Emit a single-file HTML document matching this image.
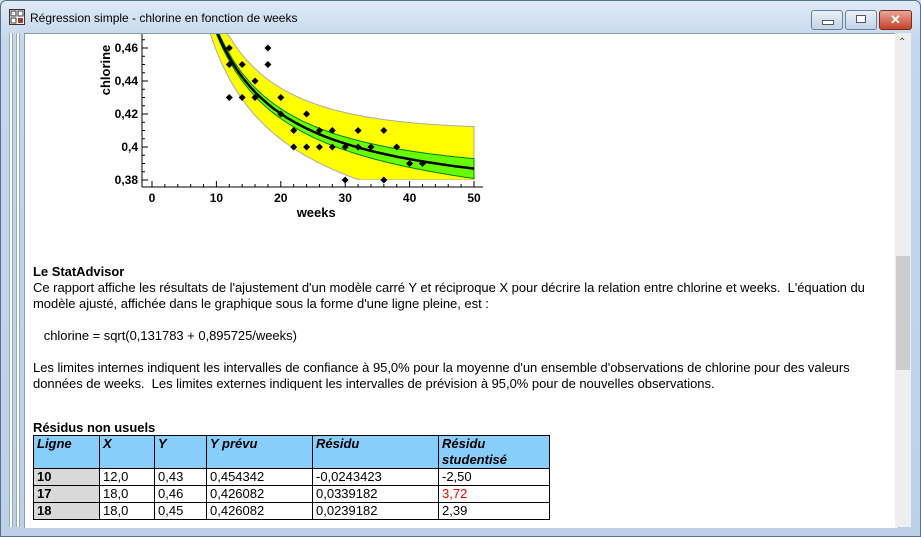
<!DOCTYPE html><html><head><meta charset="utf-8"><style>
body{margin:0;width:921px;height:537px;overflow:hidden;font-family:"Liberation Sans",Arial,sans-serif;background:#cfe0f1;position:relative}
.frame{position:absolute;left:0;top:0;width:919px;height:535px;border:1px solid #59708c;border-radius:6px 6px 0 0;background:linear-gradient(#dfeaf6,#c4d7ec 40px,#bcd1e8)}
.title{position:absolute;left:30px;top:11px;font-size:12px;color:#000}
.content{position:absolute;left:24px;top:33px;width:872px;height:494px;background:#fff;border-top:1px solid #8a9bb0;border-left:1px solid #8a9bb0}
.sb{position:absolute;left:895px;top:33px;width:16px;height:494px;background:#eeeeee}
.thumb{position:absolute;left:896px;top:256px;width:14px;height:114px;background:#cdcdcd}
.split{position:absolute;top:33px;height:494px;width:2px;background:#fff;border-left:1px solid #9aa;border-right:1px solid #9aa}
.btn{position:absolute;top:10px;height:18px;border:1px solid #6b7f99;border-radius:3px;background:linear-gradient(#e8f0f9,#c2d3e7)}
p{margin:0;position:absolute;left:33px;font-size:13px;line-height:16px;white-space:nowrap;letter-spacing:-0.03px}
table{position:absolute;left:33px;top:435px;border-collapse:collapse;font-size:13px}
td{border:1px solid #000;padding:0 3px;height:16px;line-height:16px;vertical-align:top}
th{border:1px solid #000;padding:0 3px;background:#87cefa;font-style:italic;text-align:left;vertical-align:top;line-height:16px;height:32px}
td.g{background:#d9d9d9;font-weight:bold}
</style></head><body>
<div class="frame"></div>
<svg style="position:absolute;left:9px;top:9px" width="16" height="16"><rect x="0.5" y="0.5" width="15" height="15" fill="#fff" stroke="#333"/><rect x="2" y="2" width="5" height="5" fill="none" stroke="#333"/><rect x="9" y="2" width="5" height="5" fill="none" stroke="#333"/><rect x="2" y="9" width="5" height="5" fill="none" stroke="#333"/><rect x="9" y="9" width="5" height="5" fill="#a33"/></svg>
<div class="title">Régression simple - chlorine en fonction de weeks</div>
<div class="btn" style="left:811px;width:30px"><div style="position:absolute;left:10px;top:9px;width:10px;height:3px;background:#fff;border:1px solid #556"></div></div>
<div class="btn" style="left:845px;width:30px"><div style="position:absolute;left:10px;top:4px;width:8px;height:6px;border:1px solid #556;background:#fff"></div></div>
<div class="btn" style="left:879px;width:31px;background:linear-gradient(#e9a89a,#c7402a);border-color:#7a2a1f;color:#fff;font-weight:bold;font-size:13px;text-align:center;line-height:17px">✕</div>
<div class="split" style="left:9px"></div><div class="split" style="left:16px"></div>
<div class="content"></div>
<div class="sb"></div><div class="thumb"></div>
<div style="position:absolute;left:898px;top:37px;font-size:10px;color:#444">⌃</div>
<svg id="plot" style="position:absolute;left:24px;top:34px" width="480" height="190" font-family="Liberation Sans,Arial,sans-serif" font-weight="bold" font-size="12"></svg>
<p style="top:264px;font-weight:bold">Le StatAdvisor</p>
<p style="top:280px">Ce rapport affiche les résultats de l'ajustement d'un modèle carré Y et réciproque X pour décrire la relation entre chlorine et weeks.&nbsp; L'équation du</p>
<p style="top:296px">modèle ajusté, affichée dans le graphique sous la forme d'une ligne pleine, est :</p>
<p style="top:328px">&nbsp;&nbsp;&nbsp;chlorine = sqrt(0,131783 + 0,895725/weeks)</p>
<p style="top:360px">Les limites internes indiquent les intervalles de confiance à 95,0% pour la moyenne d'un ensemble d'observations de chlorine pour des valeurs</p>
<p style="top:376px">données de weeks.&nbsp; Les limites externes indiquent les intervalles de prévision à 95,0% pour de nouvelles observations.</p>
<p style="top:420px;font-weight:bold">Résidus non usuels</p>
<table>
<tr><th style="width:59px">Ligne</th><th style="width:48px">X</th><th style="width:45px">Y</th><th style="width:99px">Y prévu</th><th style="width:119px">Résidu</th><th style="width:104px">Résidu<br>studentisé</th></tr>
<tr><td class="g">10</td><td>12,0</td><td>0,43</td><td>0,454342</td><td>-0,0243423</td><td>-2,50</td></tr>
<tr><td class="g">17</td><td>18,0</td><td>0,46</td><td>0,426082</td><td>0,0339182</td><td style="color:#f00">3,72</td></tr>
<tr><td class="g">18</td><td>18,0</td><td>0,45</td><td>0,426082</td><td>0,0239182</td><td>2,39</td></tr>
</table>
<script>
var s=document.getElementById('plot'),ox=24,oy=34;
function X(x){return 152+x*6.44-ox}function Y(y){return 48+(0.46-y)*1650-oy}
function f(x){return Math.sqrt(0.131783+0.895725/x)}
function band(h){var up=[],dn=[];for(var x=8;x<=50.01;x+=0.5){var v=f(x),d=h(x);up.push(X(x).toFixed(1)+','+Math.max(Y(v+d),-1).toFixed(1));dn.unshift(X(x).toFixed(1)+','+Math.min(Y(Math.max(v-d,0.38)),Y(0.38)).toFixed(1));}return up.concat(dn).join(' ');}
var h='';
h+='<defs><clipPath id="c"><rect x="'+(X(0)-10)+'" y="0" width="340" height="'+Y(0.38)+'"/></clipPath></defs><g clip-path="url(#c)">';
h+='<polygon points="'+band(function(x){return 0.0155+(x-20)/30*0.010})+'" fill="#ffff00" stroke="#aaa" stroke-width="1"/>';
h+='<polygon points="'+band(function(x){return 0.003+(x-20)/30*0.003})+'" fill="#66ff00" stroke="#008000" stroke-width="1"/>';
var pl=[];for(var x=8;x<=50.01;x+=0.5)pl.push(X(x).toFixed(1)+','+Y(f(x)).toFixed(1));
h+='<polyline points="'+pl.join(' ')+'" fill="none" stroke="#000" stroke-width="2.5"/></g>';
var pts=[[12,.46],[12,.45],[12,.43],[14,.45],[14,.43],[16,.44],[16,.43],[18,.46],[18,.45],[20,.43],[20,.42],[22,.41],[22,.40],[24,.42],[24,.40],[26,.41],[26,.40],[28,.41],[28,.40],[30,.40],[30,.38],[32,.41],[32,.40],[34,.40],[36,.41],[36,.38],[38,.40],[40,.39],[42,.39]];
pts.forEach(function(p){var a=X(p[0]),b=Y(p[1]);h+='<polygon points="'+a+','+(b-3.5)+' '+(a+3.5)+','+b+' '+a+','+(b+3.5)+' '+(a-3.5)+','+b+'"/>'});
var ax=142-ox,ay=187-oy;
h+='<line x1="'+ax+'" y1="0" x2="'+ax+'" y2="'+ay+'" stroke="#000"/><line x1="'+ax+'" y1="'+ay+'" x2="'+(483-ox)+'" y2="'+ay+'" stroke="#000"/>';
for(var v=0.38;v<=0.4701;v+=0.005){var yy=Y(v);if(yy<0)continue;var big=Math.abs(Math.round(v*100)-v*100)<1e-6&&Math.round(v*100)%2==0;h+='<line x1="'+ax+'" x2="'+(ax+(big?6:3))+'" y1="'+yy+'" y2="'+yy+'" stroke="#000"/>';}
[[.46,'0,46'],[.44,'0,44'],[.42,'0,42'],[.40,'0,4'],[.38,'0,38']].forEach(function(t){h+='<text x="'+(ax-4)+'" y="'+(Y(t[0])+4)+'" text-anchor="end">'+t[1]+'</text>'});
for(var x=0;x<=50;x+=2){var xx=X(x);h+='<line x1="'+xx+'" x2="'+xx+'" y1="'+ay+'" y2="'+(ay-(x%10==0?6:3))+'" stroke="#000"/>';if(x%10==0)h+='<text x="'+xx+'" y="'+(ay+15)+'" text-anchor="middle">'+x+'</text>';}
h+='<text x="'+(X(25.5))+'" y="'+(ay+30)+'" text-anchor="middle" font-size="13">weeks</text>';
h+='<text transform="translate('+(110-ox)+','+(70-oy)+') rotate(-90)" text-anchor="middle" font-size="13">chlorine</text>';
s.innerHTML=h;
</script>
</body></html>
